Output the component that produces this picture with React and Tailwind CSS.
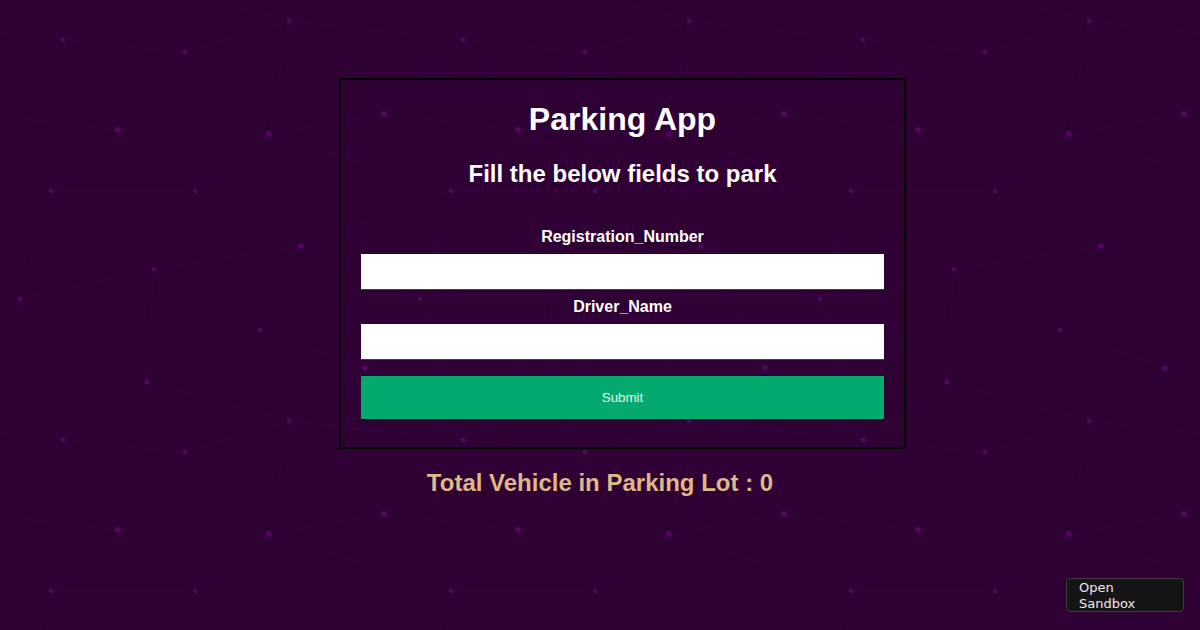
const N = {
  a: [289, 21, 2.5], b: [63, 40, 2.5], c: [185, 52, 2.5], d: [118, 130, 2.9], e: [269, 134, 2.9],
  f: [384, 114, 2.9], g: [51, 191, 2.4], h: [195, 191, 2.4], i: [301, 246, 2.8], j: [154, 269, 2.5],
  k: [20, 299, 2.4], l: [260, 330, 2.4], m: [365, 368, 2.8], n: [147, 382, 2.5],
};

const E = [
  ["b", "c"], ["c", "a"], ["b", "d"], ["c", "d"], ["d", "e"], ["c", "e"], ["e", "a"], ["a", "f"], ["e", "f"],
  ["d", "g"], ["d", "h"], ["g", "h"], ["e", "h"], ["h", "j"], ["h", "i"], ["i", "e"], ["i", "l"], ["i", "m"],
  ["i", "j"], ["j", "l"], ["j", "k"], ["j", "n"], ["j", "g"], ["k", "g"], ["k", "n"], ["l", "n"], ["l", "m"],
  ["a", "b", 400, 0], ["f", "b", 400, 0], ["f", "d", 400, 0], ["f", "g", 400, 0], ["e", "g", 400, 0],
  ["i", "g", 400, 0], ["i", "k", 400, 0], ["m", "k", 400, 0], ["m", "b", 400, 400], ["m", "a", 0, 400],
  ["l", "a", 0, 400], ["n", "a", 0, 400], ["n", "b", 0, 400], ["n", "c", 0, 400], ["k", "b", 0, 400],
];

const offsets = [];
for (let ox = -400; ox <= 1200; ox += 400) {
  for (let oy = -400; oy <= 800; oy += 400) offsets.push([ox, oy]);
}

function Backdrop() {
  return (
    <svg className="absolute inset-0 w-full h-full" viewBox="0 0 1200 630" aria-hidden="true">
      {offsets.map(([ox, oy]) => (
        <g key={`${ox}:${oy}`} transform={`translate(${ox} ${oy})`}>
          {E.map(([p, q, dx = 0, dy = 0]) => (
            <line
              key={p + q}
              x1={N[p][0]}
              y1={N[p][1]}
              x2={N[q][0] + dx}
              y2={N[q][1] + dy}
              stroke="#38033f"
              strokeWidth="0.9"
            />
          ))}
          {Object.entries(N).map(([name, [x, y, r]]) => (
            <circle key={name} cx={x} cy={y} r={r} fill="#52075f" />
          ))}
        </g>
      ))}
    </svg>
  );
}

function Field({ label }) {
  return (
    <div className="flex flex-col">
      <label className="h-[18px] text-center text-[16px] leading-[18px] font-bold text-white">{label}</label>
      <input
        type="text"
        className="mt-2 h-9 w-full bg-white border-b border-b-[#443c3c] outline-none"
      />
    </div>
  );
}

export default function App() {
  return (
    <div className="relative h-[630px] w-[1200px] overflow-hidden bg-[#2e0033] font-['Liberation_Sans',Arial,sans-serif]">
      <Backdrop />
      <div className="relative flex flex-col pt-[78px]">
        <form className="ml-[339px] flex w-[567px] flex-col border-2 border-black px-5 pt-5 pb-7">
          <h1 className="text-center text-[32px] leading-[39px] font-bold text-white">Parking App</h1>
          <h2 className="mt-[21px] text-center text-[24px] leading-7 font-bold text-white">
            Fill the below fields to park
          </h2>
          <div className="mt-10 flex flex-col gap-2">
            <Field label="Registration_Number" />
            <Field label="Driver_Name" />
          </div>
          <button
            type="button"
            className="mt-4 h-[43px] w-full bg-[#04aa6d] text-[13.33px] text-[#e6f7f0]"
          >
            Submit
          </button>
        </form>
        <p className="mt-5 text-center text-[24px] leading-7 font-bold text-[#deb887]">
          Total Vehicle in Parking Lot : 0
        </p>
      </div>
      <a className="absolute right-4 bottom-[18px] flex h-[34px] w-[118px] flex-col rounded border border-[#43383a] bg-[#151515] pt-px pl-3 font-['DejaVu_Sans',sans-serif] text-[13px] leading-4 text-[#f3e5f0]">
        <span>Open</span>
        <span>Sandbox</span>
      </a>
    </div>
  );
}
